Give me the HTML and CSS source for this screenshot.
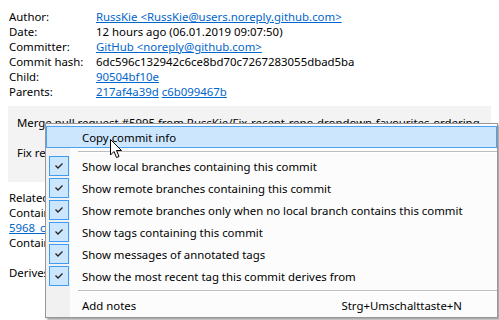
FILE: index.html
```html
<!DOCTYPE html>
<html lang="en">
<head>
  <meta charset="UTF-8">
  <title>Commit info</title>
  <link rel="stylesheet" href="styles.css">
</head>
<body>
  <div class="details">
    <div class="label">Author:</div>
    <div class="value"><a href="#">RussKie &lt;RussKie@users.noreply.github.com&gt;</a></div>
    <div class="label">Date:</div>
    <div class="value">12 hours ago (06.01.2019 09:07:50)</div>
    <div class="label">Committer:</div>
    <div class="value"><a href="#">GitHub &lt;noreply@github.com&gt;</a></div>
    <div class="label">Commit hash:</div>
    <div class="value">6dc596c132942c6ce8bd70c7267283055dbad5ba</div>
    <div class="label">Child:</div>
    <div class="value"><a href="#">90504bf10e</a></div>
    <div class="label">Parents:</div>
    <div class="value"><a href="#">217af4a39d</a> <a href="#">c6b099467b</a></div>
  </div>

  <div class="message">
    <div class="line">Merge pull request #5995 from RussKie/Fix-recent-repo-dropdown-favourites-ordering</div>
    <div class="line">&nbsp;</div>
    <div class="line">Fix recent repo dropdown favourites ordering</div>
  </div>

  <div class="related">
    <div class="line">Related</div>
    <div class="line">Contained in branches</div>
    <div class="line"><a href="#">5968_contained</a></div>
    <div class="line">Contained in tags</div>
    <div class="line">&nbsp;</div>
    <div class="line">Derives from tag</div>
  </div>

  <div class="menu">
    <div class="item active"><span class="icon"></span><span class="text">Copy commit info</span></div>
    <div class="sep"></div>
    <div class="item"><span class="icon check"><svg width="8" height="6" viewBox="0 0 8 6"><path d="M0.5 2.5 L3 5 L7.5 0.5" fill="none" stroke="#222" stroke-width="1.3"/></svg></span><span class="text">Show local branches containing this commit</span></div>
    <div class="item"><span class="icon check"><svg width="8" height="6" viewBox="0 0 8 6"><path d="M0.5 2.5 L3 5 L7.5 0.5" fill="none" stroke="#222" stroke-width="1.3"/></svg></span><span class="text">Show remote branches containing this commit</span></div>
    <div class="item"><span class="icon check"><svg width="8" height="6" viewBox="0 0 8 6"><path d="M0.5 2.5 L3 5 L7.5 0.5" fill="none" stroke="#222" stroke-width="1.3"/></svg></span><span class="text">Show remote branches only when no local branch contains this commit</span></div>
    <div class="item"><span class="icon check"><svg width="8" height="6" viewBox="0 0 8 6"><path d="M0.5 2.5 L3 5 L7.5 0.5" fill="none" stroke="#222" stroke-width="1.3"/></svg></span><span class="text">Show tags containing this commit</span></div>
    <div class="item"><span class="icon check"><svg width="8" height="6" viewBox="0 0 8 6"><path d="M0.5 2.5 L3 5 L7.5 0.5" fill="none" stroke="#222" stroke-width="1.3"/></svg></span><span class="text">Show messages of annotated tags</span></div>
    <div class="item"><span class="icon check"><svg width="8" height="6" viewBox="0 0 8 6"><path d="M0.5 2.5 L3 5 L7.5 0.5" fill="none" stroke="#222" stroke-width="1.3"/></svg></span><span class="text">Show the most recent tag this commit derives from</span></div>
    <div class="sep"></div>
    <div class="item"><span class="icon"></span><span class="text">Add notes</span><span class="key">Strg+Umschalttaste+N</span></div>
  </div>

  <svg class="cursor" width="13" height="20" viewBox="0 0 13 20">
    <path d="M0.5 0.5 L0.5 16 L4 12.5 L6.5 18.5 L9 17.5 L6.5 11.5 L11.5 11.5 Z" fill="#fff" stroke="#000" stroke-width="1" stroke-linejoin="miter"/>
  </svg>
</body>
</html>
```

FILE: styles.css
```css
/* Page */
body {
  margin: 0;
  font-family: "Noto Sans", "Open Sans", sans-serif;
  font-size: 11.4px;
  line-height: 15px;
  color: #000;
  background: #fff;
  width: 499px;
  height: 320px;
  overflow: hidden;
  position: relative;
}
a { color: #0066cc; text-decoration: underline; }

/* Commit header: label / value grid */
.details {
  display: grid;
  grid-template-columns: 87px auto;
  padding: 9px 0 0 9px;
}
.value { white-space: nowrap; }

/* Commit message box */
.message {
  margin: 7px 8px 0 8px;
  padding: 9px 9px 0 9px;
  height: 67px;
  background: #f3f3f3;
  white-space: nowrap;
  overflow: hidden;
}

.related {
  padding: 8px 0 0 9px;
  white-space: nowrap;
}

/* Context menu (floats over the panel) */
.menu {
  position: absolute;
  left: 45px;
  top: 123px;
  width: 451px;
  padding: 2px 0 1px 0;
  border: 1px solid #979797;
  background: linear-gradient(to right, #f1f1f1 0, #f1f1f1 24px, #fcfcfc 24px);
  box-shadow: 2px 2px 2px rgba(0, 0, 0, 0.35);
}
.item {
  display: flex;
  align-items: center;
  height: 22px;
  box-sizing: border-box;
  padding: 0 34px 0 2px;
  border: 1px solid transparent;
}
.item.active {
  background: #cce6fd;
  border-color: #4aa2f6;
}
.icon {
  width: 20px;
  height: 20px;
  box-sizing: border-box;
  flex: none;
  margin-right: 13px;
}
.check {
  display: flex;
  align-items: center;
  justify-content: center;
  background: #cce6fd;
  border: 1px solid #3f9cf5;
}
.text { flex: 1; white-space: nowrap; }
.key { white-space: nowrap; }
.sep {
  height: 1px;
  margin: 3px 0 2px 32px;
  background: #bdbdbd;
  border-bottom: 1px solid #fff;
}

.cursor {
  position: absolute;
  left: 110px;
  top: 139px;
}
```
